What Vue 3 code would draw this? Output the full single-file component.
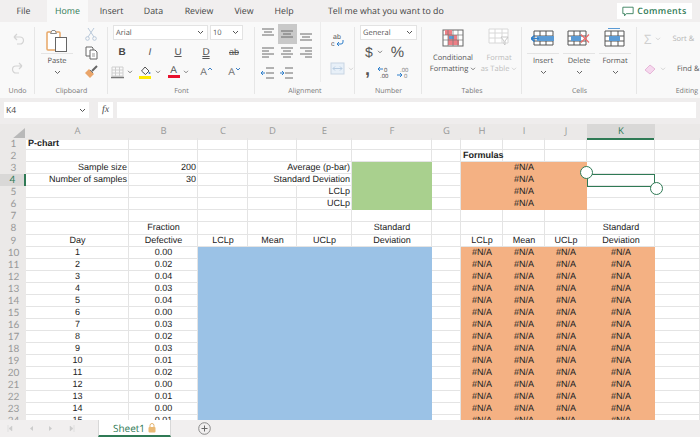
<script setup>
const tabs = [
  { name: 'File', w: 47 },
  { name: 'Home', w: 41, active: true },
  { name: 'Insert', w: 47 },
  { name: 'Data', w: 37 },
  { name: 'Review', w: 54 },
  { name: 'View', w: 36 },
  { name: 'Help', w: 44 },
]

// line extents for the small alignment glyphs
const alignIcons = [
  { ys: [3, 6, 9], xs: [[2, 14], [4, 12], [2, 14]] },
  { ys: [5, 8, 11], xs: [[2, 14], [4, 12], [2, 14]], on: true },
  { ys: [8, 11, 14], xs: [[2, 14], [4, 12], [2, 14]] },
  { ys: [3, 6, 9, 12], xs: [[2, 14], [2, 9], [2, 14], [2, 9]] },
  { ys: [3, 6, 9, 12], xs: [[2, 14], [4, 12], [2, 14], [4, 12]] },
  { ys: [3, 6, 9, 12], xs: [[2, 14], [7, 14], [2, 14], [7, 14]] },
]

const cols = ['A', 'B', 'C', 'D', 'E', 'F', 'G', 'H', 'I', 'J', 'K', 'L']

const text = {
  A1: ['P-chart', 'b'],
  H2: ['Formulas', 'b'],
  A3: ['Sample size', 'r'],
  B3: ['200', 'r'],
  A4: ['Number of samples', 'r'],
  B4: ['30', 'r'],
  E3: ['Average (p-bar)', 'r'],
  E4: ['Standard Deviation', 'r'],
  E5: ['LCLp', 'r'],
  E6: ['UCLp', 'r'],
  B8: ['Fraction', 'c'],
  F8: ['Standard', 'c'],
  K8: ['Standard', 'c'],
  A9: ['Day', 'c'],
  B9: ['Defective', 'c'],
  C9: ['LCLp', 'c'],
  D9: ['Mean', 'c'],
  E9: ['UCLp', 'c'],
  F9: ['Deviation', 'c'],
  H9: ['LCLp', 'c'],
  I9: ['Mean', 'c'],
  J9: ['UCLp', 'c'],
  K9: ['Deviation', 'c'],
}
for (let r = 3; r <= 6; r++) text['I' + r] = ['#N/A', 'c']

const fractions = ['0.00', '0.02', '0.04', '0.03', '0.04', '0.00', '0.03', '0.02', '0.03', '0.01', '0.02', '0.00', '0.01', '0.00', '0.01']
fractions.forEach((f, i) => {
  const r = 10 + i
  text['A' + r] = [String(i + 1), 'c']
  text['B' + r] = [f, 'c']
  for (const c of ['H', 'I', 'J', 'K']) text[c + r] = ['#N/A', 'c']
})

function fill(c, r) {
  if (c === 'F' && r >= 3 && r <= 6) return 'green'
  if ('CDEF'.includes(c) && r >= 10) return 'blue'
  if ('HIJ'.includes(c) && r >= 3 && r <= 6) return 'orange'
  if ('HIJK'.includes(c) && r >= 10) return 'orange'
  return ''
}

const rows = []
for (let r = 1; r <= 24; r++) {
  rows.push({
    n: r,
    cells: cols.map((c) => {
      const t = text[c + r]
      const classes = [fill(c, r), t ? t[1] : '']
      if (c === 'D' && (r === 3 || r === 4)) classes.push('open')
      return { id: c + r, label: t ? t[0] : '', classes }
    }),
  })
}
</script>

<template>
  <div class="app">
    <div class="tabbar">
      <div
        v-for="t in tabs"
        :key="t.name"
        class="tab"
        :class="{ active: t.active }"
        :style="{ width: t.w + 'px' }"
      >{{ t.name }}</div>
      <div class="tell">Tell me what you want to do</div>
      <div class="comments">
        <svg width="12" height="11" viewBox="0 0 14 12"><path d="M1 1h12v7.500H5L3 11V8.500H1z" fill="none" stroke="#2f7a55" stroke-width="1"/></svg>
        <span>Comments</span>
      </div>
    </div>

    <div class="ribbon">
      <div class="group" style="width: 35px">
        <div class="body undo">
          <svg width="14" height="14" viewBox="0 0 14 14"><path d="M3 5h6a3.500 3.500 0 0 1 0 7H6M3 5l3-3M3 5l3 3" fill="none" stroke="#d4d4d4" stroke-width="1.200"/></svg>
          <svg width="14" height="14" viewBox="0 0 14 14"><path d="M11 5H5a3.500 3.500 0 0 0 0 7h3M11 5L8 2M11 5L8 8" fill="none" stroke="#d4d4d4" stroke-width="1.200"/></svg>
        </div>
        <div class="label">Undo</div>
      </div>

      <div class="group" style="width: 73px">
        <div class="body clip">
          <div class="paste">
            <svg width="22" height="24" viewBox="0 0 22 24">
              <rect x="1" y="3" width="13" height="18" rx="1" fill="#fff" stroke="#e8a765" stroke-width="1.500"/>
              <path d="M4.500 4.500 6 1.500h3l1.500 3z" fill="#fff" stroke="#8a8a8a"/>
              <rect x="9.500" y="8.500" width="11" height="14" fill="#fff" stroke="#666"/>
            </svg>
            <div class="rule"></div>
            <div class="small">Paste</div>
            <svg class="chev" width="7" height="5" viewBox="0 0 7 5"><path d="M1 1l2.500 2.500L6 1" fill="none" stroke="#666"/></svg>
          </div>
          <div class="clip-tools">
            <svg width="12" height="14" viewBox="0 0 12 14"><path d="M3 1l6 9M9 1L3 10" stroke="#b9c9da" fill="none"/><circle cx="2.500" cy="11.500" r="1.800" fill="none" stroke="#b9c9da"/><circle cx="9.500" cy="11.500" r="1.800" fill="none" stroke="#b9c9da"/></svg>
            <svg width="13" height="14" viewBox="0 0 13 14"><path d="M1 1h6l1 1v8H1z" fill="#fff" stroke="#666"/><path d="M5 4h5l2 2v7H5z" fill="#fff" stroke="#666"/><path d="M7 8h3M7 10h3" stroke="#999"/></svg>
            <svg width="14" height="14" viewBox="0 0 14 14"><path d="M8 6 13 1" stroke="#666" stroke-width="2"/><path d="M5 4l5 5-4 4-5-5z" fill="#eaa56a"/><path d="M6 5l3 3" stroke="#777"/></svg>
          </div>
        </div>
        <div class="label">Clipboard</div>
      </div>

      <div class="group" style="width: 147px">
        <div class="body font">
          <div class="selects">
            <div class="select" style="width: 95px"><span>Arial</span><svg width="7" height="5" viewBox="0 0 7 5"><path d="M1 1l2.500 2.500L6 1" fill="none" stroke="#555"/></svg></div>
            <div class="select" style="width: 33px"><span>10</span><svg width="7" height="5" viewBox="0 0 7 5"><path d="M1 1l2.500 2.500L6 1" fill="none" stroke="#555"/></svg></div>
          </div>
          <div class="font-row">
            <span class="glyph bold">B</span>
            <span class="glyph ital">I</span>
            <span class="glyph under">U</span>
            <span class="glyph dbl">D</span>
            <span class="glyph strike">ab</span>
          </div>
          <div class="font-row">
            <span class="mix">
              <svg width="13" height="13" viewBox="0 0 13 13"><path d="M1 1h11v9H1zM1 4h11M1 7h11M4.500 1v9M8.500 1v9" fill="none" stroke="#cfcfcf"/><path d="M0 11.500h13" stroke="#777" stroke-width="1.500"/></svg>
              <svg width="6" height="4" viewBox="0 0 7 5"><path d="M1 1l2.500 2.500L6 1" fill="none" stroke="#666"/></svg>
            </span>
            <span class="mix">
              <svg width="13" height="13" viewBox="0 0 13 13"><path d="M6 1l4 4-3.500 3.500L2.500 5z" fill="none" stroke="#555"/><circle cx="10.500" cy="7" r="1" fill="#3b7fc4"/><rect x="0" y="10" width="12" height="3" fill="#ffea00"/></svg>
              <svg width="6" height="4" viewBox="0 0 7 5"><path d="M1 1l2.500 2.500L6 1" fill="none" stroke="#666"/></svg>
            </span>
            <span class="mix">
              <span class="color-a">A</span>
              <svg width="6" height="4" viewBox="0 0 7 5"><path d="M1 1l2.500 2.500L6 1" fill="none" stroke="#666"/></svg>
            </span>
            <span class="grow">A<svg width="4" height="3" viewBox="0 0 4 3"><path d="M0 3l2-2 2 2" fill="none" stroke="#3b7fc4"/></svg></span>
            <span class="grow">A<svg width="4" height="3" viewBox="0 0 4 3"><path d="M0 1l2 2 2-2" fill="none" stroke="#3b7fc4"/></svg></span>
          </div>
        </div>
        <div class="label">Font</div>
      </div>

      <div class="group" style="width: 100px">
        <div class="body align">
          <div class="align-grid">
            <div v-for="(a, i) in alignIcons" :key="i" class="align-cell" :class="{ on: a.on }">
              <svg width="16" height="16" viewBox="0 0 16 16">
                <line v-for="(x, j) in a.xs" :key="j" :x1="x[0]" :x2="x[1]" :y1="a.ys[j]" :y2="a.ys[j]" stroke="#6b6b6b"/>
              </svg>
            </div>
            <div class="align-cell">
              <svg width="16" height="16" viewBox="0 0 16 16"><path d="M6 3h8M6 8h8M6 13h8" stroke="#6b6b6b"/><path d="M1 8h4M1 8l2-2M1 8l2 2" stroke="#2f7fcb" fill="none"/></svg>
            </div>
            <div class="align-cell">
              <svg width="16" height="16" viewBox="0 0 16 16"><path d="M6 3h8M6 8h8M6 13h8" stroke="#6b6b6b"/><path d="M1 8h4M5 8L3 6M5 8l-2 2" stroke="#2f7fcb" fill="none"/></svg>
            </div>
          </div>
          <div class="wrap-col">
            <svg width="14" height="15" viewBox="0 0 14 15"><text x="2" y="7" font-size="7" fill="#555" font-family="Liberation Sans">ab</text><text x="0" y="14" font-size="7" fill="#555" font-family="Liberation Sans">c</text><path d="M12 8v2a2 2 0 0 1-2 2H6M6 12l2-2M6 12l2 2" stroke="#2f7fcb" fill="none"/></svg>
            <span class="mix merge">
              <svg width="15" height="13" viewBox="0 0 15 13"><rect x="1" y="1" width="13" height="11" fill="#e8f0f8" stroke="#c9d6e4"/><path d="M3 6.500h9M3 6.500l2-2M3 6.500l2 2M12 6.500l-2-2M12 6.500l-2 2" stroke="#b9cde2" fill="none"/></svg>
              <svg width="6" height="4" viewBox="0 0 7 5"><path d="M1 1l2.500 2.500L6 1" fill="none" stroke="#ccc"/></svg>
            </span>
          </div>
        </div>
        <div class="label">Alignment</div>
      </div>

      <div class="group" style="width: 67px">
        <div class="body number">
          <div class="select" style="width: 57px"><span>General</span><svg width="7" height="5" viewBox="0 0 7 5"><path d="M1 1l2.500 2.500L6 1" fill="none" stroke="#555"/></svg></div>
          <div class="num-row big">
            <span class="dollar">$</span>
            <svg width="6" height="4" viewBox="0 0 7 5"><path d="M1 1l2.500 2.500L6 1" fill="none" stroke="#666"/></svg>
            <span class="pct">%</span>
          </div>
          <div class="num-row">
            <span class="comma">,</span>
            <svg width="13" height="12" viewBox="0 0 13 12"><path d="M0 3h5M0 3l2-2M0 3l2 2" stroke="#2f7fcb" fill="none"/><text x="6" y="5.500" font-size="6" fill="#555" font-family="Liberation Sans">0</text><text x="2" y="11.500" font-size="6" fill="#555" font-family="Liberation Sans">.00</text></svg>
            <svg width="13" height="12" viewBox="0 0 13 12"><text x="3" y="5.500" font-size="6" fill="#888" font-family="Liberation Sans">.00</text><path d="M0 9h5M5 9L3 7M5 9l-2 2" stroke="#2f7fcb" fill="none"/><text x="7" y="11.500" font-size="6" fill="#888" font-family="Liberation Sans">0</text></svg>
          </div>
        </div>
        <div class="label">Number</div>
      </div>

      <div class="group" style="width: 100px">
        <div class="body tables">
          <div class="big-btn">
            <svg width="22" height="18" viewBox="0 0 22 18"><rect x="1" y="1" width="20" height="16" fill="#fff" stroke="#666"/><rect x="3" y="1" width="7" height="5" fill="#ee7f86"/><rect x="6" y="6" width="9" height="5" fill="#ee7f86"/><rect x="6" y="11" width="11" height="5" fill="#ee7f86"/><rect x="7" y="7" width="5" height="3" fill="#5b9bd5"/><path d="M6 1v16M11 1v16M16 1v16M1 6h20M1 11h20" stroke="#777" stroke-width=".7" fill="none"/></svg>
            <div class="small two">Conditional<br>Formatting <svg width="6" height="4" viewBox="0 0 7 5"><path d="M1 1l2.500 2.500L6 1" fill="none" stroke="#666"/></svg></div>
          </div>
          <div class="big-btn off">
            <svg width="22" height="20" viewBox="0 0 22 20"><path d="M1 1h19v14H1zM1 5h19M1 10h19M7 1v14M14 1v14" fill="#fff" stroke="#d8d8d8"/><path d="M13 9h7l-3 4v4l-1-1v-3z" fill="#fff" stroke="#c8c8c8"/></svg>
            <div class="small two">Format<br>as Table <svg width="6" height="4" viewBox="0 0 7 5"><path d="M1 1l2.500 2.500L6 1" fill="none" stroke="#ccc"/></svg></div>
          </div>
        </div>
        <div class="label">Tables</div>
      </div>

      <div class="group" style="width: 115px">
        <div class="body cells">
          <div class="cell-btn">
            <svg width="24" height="18" viewBox="0 0 24 18"><path d="M3 2h19v14H3zM9 2v14M15 2v14M3 7h19M3 12h19" fill="#fff" stroke="#555"/><rect x="6" y="7" width="17" height="5" fill="#5b9bd5"/><path d="M0 9.500h8M0 9.500l3.500-3M0 9.500l3.500 3" stroke="#2f7fcb" fill="none" stroke-width="1.500"/></svg>
            <div class="rule"></div>
            <div class="small">Insert</div>
            <svg width="7" height="5" viewBox="0 0 7 5"><path d="M1 1l2.500 2.500L6 1" fill="none" stroke="#666"/></svg>
          </div>
          <div class="cell-btn">
            <svg width="24" height="18" viewBox="0 0 24 18"><path d="M1 2h18v14H1zM7 2v14M13 2v14M1 7h18M1 12h18" fill="#fff" stroke="#555"/><rect x="4" y="7" width="10" height="5" fill="#5b9bd5"/><path d="M14 5.500l8 8M22 5.500l-8 8" stroke="#ee6b6b" stroke-width="1.200"/></svg>
            <div class="rule"></div>
            <div class="small">Delete</div>
            <svg width="7" height="5" viewBox="0 0 7 5"><path d="M1 1l2.500 2.500L6 1" fill="none" stroke="#666"/></svg>
          </div>
          <div class="cell-btn">
            <svg width="22" height="20" viewBox="0 0 22 20"><path d="M4 .5h12" stroke="#5b9bd5"/><path d="M1 3h19v15H1zM7 3v15M14 3v15M1 8h19M1 13h19" fill="#fff" stroke="#555"/><rect x="5" y="8" width="11" height="5" fill="#5b9bd5"/></svg>
            <div class="rule"></div>
            <div class="small">Format</div>
            <svg width="7" height="5" viewBox="0 0 7 5"><path d="M1 1l2.500 2.500L6 1" fill="none" stroke="#666"/></svg>
          </div>
        </div>
        <div class="label">Cells</div>
      </div>

      <div class="group last">
        <div class="body editing">
          <div class="edit-row">
            <span class="sigma">Σ</span>
            <svg width="6" height="4" viewBox="0 0 7 5"><path d="M1 1l2.500 2.500L6 1" fill="none" stroke="#ccc"/></svg>
            <span class="small light">Sort &amp;</span>
          </div>
          <div class="edit-row">
            <svg width="12" height="11" viewBox="0 0 12 11"><path d="M1 6l5-5 5 4-5 5z" fill="#f6d8ee" stroke="#e6b7d8"/></svg>
            <svg width="6" height="4" viewBox="0 0 7 5"><path d="M1 1l2.500 2.500L6 1" fill="none" stroke="#ccc"/></svg>
            <span class="small">Find &amp;</span>
          </div>
        </div>
        <div class="label edit-label">Editing</div>
      </div>
    </div>

    <div class="formula">
      <div class="namebox"><span>K4</span><svg width="7" height="5" viewBox="0 0 7 5"><path d="M1 1l2.500 2.500L6 1" fill="none" stroke="#555"/></svg></div>
      <div class="fx">fx</div>
      <div class="input"></div>
    </div>

    <div class="sheet">
      <div class="row head">
        <div class="rowno corner"><svg width="14" height="11" viewBox="0 0 14 11"><path d="M14 0v11H1z" fill="#b9b9b9"/></svg></div>
        <div v-for="c in cols" :key="c" class="colname" :class="{ sel: c === 'K' }">{{ c === 'L' ? '' : c }}</div>
      </div>
      <div v-for="row in rows" :key="row.n" class="row">
        <div class="rowno" :class="{ sel: row.n === 4 }">{{ row.n }}</div>
        <div v-for="cell in row.cells" :key="cell.id" class="cell" :class="cell.classes"><span>{{ cell.label }}</span></div>
      </div>
      <div class="selection">
        <i class="handle tl"></i>
        <i class="handle br"></i>
      </div>
    </div>

    <div class="sheetbar">
      <div class="nav">
        <svg width="6" height="7" viewBox="0 0 6 7"><path d="M1 0v7M5 1v5L2 3.500z" fill="#ccc" stroke="#ccc" stroke-width=".5"/></svg>
        <svg width="4" height="7" viewBox="0 0 4 7"><path d="M4 1v5L1 3.500z" fill="#ccc"/></svg>
        <svg width="4" height="7" viewBox="0 0 4 7"><path d="M0 1v5l3-2.500z" fill="#ccc"/></svg>
        <svg width="6" height="7" viewBox="0 0 6 7"><path d="M5 0v7M1 1v5l3-2.500z" fill="#ccc" stroke="#ccc" stroke-width=".5"/></svg>
      </div>
      <div class="sheettab">
        <span>Sheet1</span>
        <svg width="8" height="10" viewBox="0 0 8 10"><path d="M2 4V2.500a2 2 0 0 1 4 0V4" fill="none" stroke="#e3b36f"/><rect x="0.500" y="4" width="7" height="5.500" rx="1" fill="#eab974"/></svg>
      </div>
      <svg class="plus" width="13" height="13" viewBox="0 0 13 13"><circle cx="6.500" cy="6.500" r="5.800" fill="none" stroke="#8a8a8a"/><path d="M3.500 6.500h6M6.500 3.500v6" stroke="#666"/></svg>
    </div>
  </div>
</template>

<style>
html, body {
  margin: 0;
  background: #fff;
}
</style>

<style scoped>
.app {
  width: 700px;
  height: 437px;
  overflow: hidden;
  font-family: "Open Sans", "Noto Sans", sans-serif;
  color: #444;
  display: flex;
  flex-direction: column;
  text-rendering: geometricPrecision;
}

.tabbar {
  height: 22px;
  background: #f1efef;
  display: flex;
  align-items: center;
  font-size: 8.800px;
  flex: none;
}
.tab {
  height: 22px;
  line-height: 22px;
  text-align: center;
}
.tab.active {
  background: #f9f9f9;
  color: #2f7a55;
}
.tell {
  margin-left: 22px;
}
.comments {
  margin-left: auto;
  margin-right: 8px;
  width: 75px;
  height: 16px;
  background: #fff;
  display: flex;
  align-items: center;
  justify-content: center;
  gap: 3px;
  color: #2f7a55;
  font-weight: 600;
  font-size: 8.800px;
  letter-spacing: 0.400px;
}

.ribbon {
  height: 76px;
  background: #f9f9f9;
  display: flex;
  flex: none;
}
.group {
  position: relative;
  display: flex;
  flex-direction: column;
  box-sizing: border-box;
  flex: none;
}
.group::after {
  content: "";
  position: absolute;
  right: 0;
  top: 5px;
  bottom: 4px;
  width: 1px;
  background: #e6e6e6;
}
.group.last {
  flex: 1;
}
.group.last::after {
  display: none;
}
.body {
  height: 64px;
  box-sizing: border-box;
}
.label {
  height: 12px;
  line-height: 12px;
  font-size: 7px;
  text-align: center;
  color: #777;
}
.edit-label {
  text-align: right;
  padding-right: 2px;
}
.small {
  font-size: 7.500px;
  line-height: 10.500px;
  color: #555;
  text-align: center;
}
.light {
  color: #b5b5b5;
}
.rule {
  height: 1px;
  width: 32px;
  background: #e4e4e4;
}

.undo {
  display: flex;
  flex-direction: column;
  align-items: center;
  gap: 15px;
  padding-top: 10px;
}

.clip {
  display: flex;
}
.paste {
  padding: 7px 0 0 6px;
  box-sizing: content-box;
  display: flex;
  flex-direction: column;
  align-items: center;
  width: 32px;
}
.paste .small {
  margin-top: 2px;
}
.paste .chev {
  margin-top: 3px;
}
.clip-tools {
  flex: 1;
  display: flex;
  flex-direction: column;
  align-items: center;
  gap: 5px;
  padding-top: 5px;
  margin-left: 1px;
}

.selects {
  display: flex;
  gap: 2px;
  padding: 3px 0 0 5px;
}
.select {
  height: 15px;
  box-sizing: border-box;
  background: #fff;
  border: 1px solid #e3e3e3;
  display: flex;
  align-items: center;
  justify-content: space-between;
  padding: 0 3px 0 2px;
  font-size: 7.500px;
  color: #555;
}
.font-row {
  display: grid;
  grid-template-columns: repeat(5, 28px);
  height: 20px;
  align-items: center;
  justify-items: center;
  font-family: "Liberation Sans", sans-serif;
  font-size: 10px;
  color: #555;
}
.font-row:nth-child(2) {
  margin-top: 2px;
}
.glyph.bold {
  font-weight: 700;
  color: #444;
}
.glyph.ital {
  font-style: italic;
}
.glyph.under {
  text-decoration: underline;
}
.glyph.dbl {
  text-decoration: underline double;
}
.glyph.strike {
  text-decoration: line-through;
  font-size: 9px;
}
.mix {
  display: flex;
  align-items: center;
  gap: 3px;
}
.color-a {
  border-bottom: 3px solid #e8112d;
  line-height: 9px;
  width: 12px;
  text-align: center;
}
.grow {
  display: flex;
  align-items: flex-start;
  gap: 1px;
  color: #777;
}

.align {
  display: flex;
}
.align-grid {
  width: 65px;
  padding: 2px 0 0 3.500px;
  box-sizing: border-box;
  display: grid;
  grid-template-columns: repeat(3, 19px);
  grid-auto-rows: 19.500px;
}
.align-cell {
  display: flex;
  align-items: center;
  justify-content: center;
}
.align-cell.on {
  background: #c9c9c9;
}
.wrap-col {
  flex: 1;
  display: flex;
  flex-direction: column;
  align-items: center;
  gap: 15px;
  padding-top: 10px;
  border-left: 1px solid #ececec;
  margin-bottom: 4px;
  margin-right: 1px;
}
.merge {
  margin-left: 8px;
}

.number {
  padding: 3px 0 0 5px;
}
.num-row {
  display: flex;
  align-items: center;
  height: 20px;
  gap: 6px;
  font-family: "Liberation Sans", sans-serif;
  color: #555;
  padding-left: 5px;
}
.num-row.big {
  margin-top: 2px;
  font-size: 14px;
  gap: 4px;
}
.pct {
  margin-left: 4px;
  font-size: 15px;
}
.comma {
  font-size: 18px;
  font-weight: 700;
  line-height: 10px;
  margin-top: -6px;
  width: 7px;
}

.tables {
  display: flex;
  padding-left: 5px;
}
.big-btn {
  width: 52px;
  padding-top: 7px;
  display: flex;
  flex-direction: column;
  align-items: center;
  gap: 6px;
}
.big-btn.off {
  width: 40px;
  padding-top: 6px;
  gap: 5px;
}
.big-btn.off .small {
  color: #bdbdbd;
}

.cells {
  display: grid;
  grid-template-columns: repeat(3, 36px);
  padding-left: 3px;
}
.cell-btn {
  display: flex;
  flex-direction: column;
  align-items: center;
  height: 60px;
}
.cell-btn > svg:first-child {
  height: 20px;
  margin-top: 6px;
}
.cell-btn .rule {
  margin-top: 5px;
}
.cell-btn .small {
  margin-top: 2px;
  margin-bottom: 3px;
}

.editing {
  padding: 9px 0 0 7px;
}
.edit-row {
  display: flex;
  gap: 4px;
  align-items: center;
  height: 16px;
  margin-bottom: 14px;
}
.edit-row .small {
  margin-left: 7px;
  white-space: nowrap;
}
.sigma {
  font-size: 13px;
  color: #cfcfcf;
}

.formula {
  height: 26px;
  background: #efeded;
  flex: none;
  display: flex;
  padding: 4px 4px 6px 4px;
  box-sizing: border-box;
}
.namebox {
  width: 85px;
  background: #fff;
  display: flex;
  align-items: center;
  justify-content: space-between;
  padding: 0 3px 0 2px;
  box-sizing: border-box;
  font-size: 8.500px;
  color: #444;
}
.fx {
  width: 15px;
  margin-left: 9px;
  background: #fff;
  text-align: center;
  font-family: "Liberation Serif", serif;
  font-style: italic;
  font-size: 10px;
  line-height: 15px;
}
.input {
  flex: 1;
  margin-left: 4px;
  background: #fff;
}

.sheet {
  position: relative;
  height: 296px;
  overflow: hidden;
  flex: none;
  background: #fff;
  font-family: "Liberation Sans", Arial, sans-serif;
  font-size: 9px;
  color: #222;
}
.row {
  display: grid;
  grid-template-columns: 26px 103px 69px 50px 49px 55px 80px 29px 42px 42px 42px 68px 45px;
  height: 12.070px;
}
.row.head {
  height: 14px;
}
.rowno {
  background: #ebe9e8;
  color: #999;
  text-align: center;
  line-height: 12px;
  box-sizing: border-box;
  font-family: Lato, sans-serif;
  font-size: 10px;
  padding-left: 1px;
}
.rowno.sel {
  background: #d9d8d7;
  color: #2f7a55;
  border-right: 2px solid #2f7a55;
}
.rowno.corner {
  display: flex;
  justify-content: flex-end;
  align-items: flex-end;
  padding: 0 1px 1px 0;
}
.colname {
  background: #ebe9e8;
  color: #999;
  text-align: center;
  line-height: 14px;
  font-family: "Open Sans", sans-serif;
  font-size: 9.500px;
  box-sizing: border-box;
}
.colname.sel {
  background: #d9d8d7;
  color: #2f7a55;
  border-bottom: 2px solid #2f7a55;
}
.colname:last-child {
  background: #ebe9e8;
}
.cell {
  box-sizing: border-box;
  border-right: 1px solid #e4e4e4;
  border-bottom: 1px solid #e4e4e4;
  display: flex;
  align-items: center;
  white-space: nowrap;
  line-height: 11px;
  min-width: 0;
  padding: 0 1px 0 2px;
}
.cell.r {
  justify-content: flex-end;
}
.cell.c {
  justify-content: center;
}
.cell.b {
  font-weight: 700;
}
.cell.open {
  border-right-color: transparent;
}
.cell.green {
  background: #a9d08e;
  border-color: #a9d08e;
}
.cell.blue {
  background: #9bc2e6;
  border-color: #9bc2e6;
}
.cell.orange {
  background: #f4b183;
  border-color: #f4b183;
}

.selection {
  position: absolute;
  left: 587px;
  top: 50px;
  width: 68px;
  height: 13px;
  box-sizing: border-box;
  border: 1.500px solid #2f7a55;
}
.handle {
  position: absolute;
  width: 13px;
  height: 13px;
  box-sizing: border-box;
  border: 1.500px solid #2f7a55;
  border-radius: 50%;
  background: #fff;
}
.handle.tl {
  left: -8px;
  top: -9px;
}
.handle.br {
  right: -9px;
  bottom: -9px;
}

.sheetbar {
  flex: 1;
  background: #f1efef;
  display: flex;
  align-items: center;
  position: relative;
}
.nav {
  width: 98px;
  display: flex;
  gap: 16px;
  padding-left: 7px;
  box-sizing: border-box;
}
.sheettab {
  width: 73px;
  height: 17px;
  box-sizing: border-box;
  background: #fff;
  border-bottom: 2px solid #2f7a55;
  border-left: 1px solid #d8d8d8;
  border-right: 1px solid #d8d8d8;
  display: flex;
  align-items: center;
  justify-content: center;
  gap: 3px;
  color: #2f7a55;
  font-size: 10px;
  font-family: "Open Sans", sans-serif;
}
.plus {
  margin-left: 27px;
}
</style>
